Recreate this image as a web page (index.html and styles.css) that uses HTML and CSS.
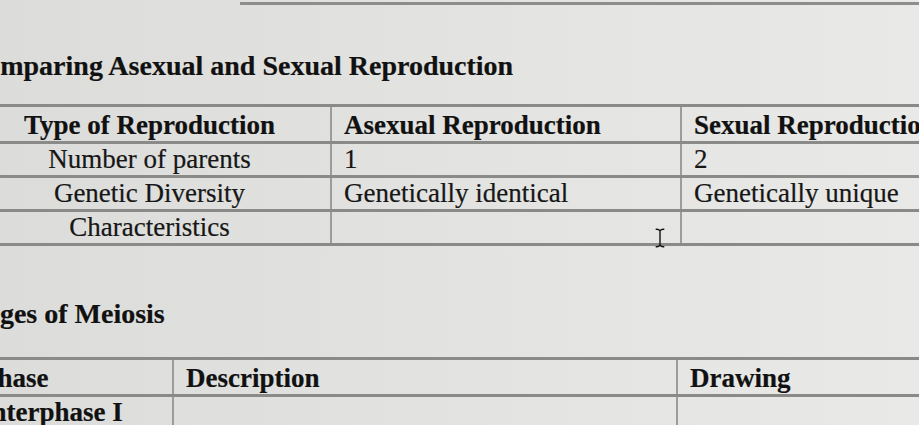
FILE: index.html
```html
<!DOCTYPE html>
<html lang="en">
<head>
<meta charset="utf-8">
<title>Reproduction worksheet</title>
<link rel="stylesheet" href="styles.css">
</head>
<body>
<div class="page">
  <div class="prev-rule"></div>
  <h2 class="title">Comparing Asexual and Sexual Reproduction</h2>
  <table class="grid compare">
    <colgroup><col class="c1"><col class="c2"><col class="c3"></colgroup>
    <tr class="head">
      <th class="center">Type of Reproduction</th>
      <th>Asexual Reproduction</th>
      <th>Sexual Reproduction</th>
    </tr>
    <tr>
      <td class="center">Number of parents</td>
      <td>1</td>
      <td>2</td>
    </tr>
    <tr>
      <td class="center">Genetic Diversity</td>
      <td>Genetically identical</td>
      <td>Genetically unique</td>
    </tr>
    <tr>
      <td class="center">Characteristics</td>
      <td></td>
      <td></td>
    </tr>
  </table>
  <h2 class="title title-two">Stages of Meiosis</h2>
  <table class="grid meiosis">
    <colgroup><col class="m1"><col class="m2"><col class="m3"></colgroup>
    <tr class="head">
      <th>Phase</th>
      <th>Description</th>
      <th>Drawing</th>
    </tr>
    <tr>
      <td class="bold">Interphase I</td>
      <td></td>
      <td></td>
    </tr>
  </table>
</div>
<svg class="ibeam" width="10" height="20" viewBox="0 0 10 20" aria-hidden="true">
  <path d="M1.2 1.2 Q4 1 5 3 Q6 1 8.8 1.2 M5 3 V17 M1.2 18.8 Q4 19 5 17 Q6 19 8.8 18.8" fill="none" stroke="#111" stroke-width="1.4" stroke-linecap="round"/>
</svg>
</body>
</html>
```
FILE: styles.css
```css
html, body {
  margin: 0;
  padding: 0;
  overflow: hidden;
}
body {
  position: relative;
  width: 919px;
  height: 425px;
  background: linear-gradient(90deg, #dcdddb 0%, #e2e3e0 45%, #e9e9e7 100%);
  font-family: "Liberation Serif", "Times New Roman", serif;
  color: #161616;
}
.page {
  width: 1080px;
  margin-left: -33px;
}
.prev-rule {
  margin-top: 2px;
  margin-left: 273px;
  border-top: 3px solid #8d8d8b;
}
.title {
  margin: 45px 0 0 -1px;
  font-size: 28px;
  line-height: 32px;
  font-weight: bold;
  color: #111;
  -webkit-text-stroke: 0.2px #111;
}
.title-two {
  margin-top: 52px;
  margin-left: -6px;
}
.grid {
  border-collapse: collapse;
  table-layout: fixed;
  width: 1080px;
  font-size: 27px;
  line-height: 31px;
  -webkit-text-stroke: 0.2px #161616;
}
.compare { margin-top: 22px; }
.meiosis { margin-top: 27px; }
.grid th,
.grid td {
  border-top: 3px solid #8a8a88;
  border-bottom: 3px solid #8a8a88;
  border-left: 2px solid #9c9c9a;
  border-right: 2px solid #9c9c9a;
  padding: 0 12px;
  text-align: left;
  vertical-align: top;
  white-space: nowrap;
  overflow: hidden;
}
.grid th {
  font-weight: bold;
  color: #111;
  padding-top: 3px;
  height: 31px;
}
.grid td { height: 31px; }
.grid .center { text-align: center; }
.grid .bold { font-weight: bold; color: #111; }
.c1 { width: 363px; }
.c2 { width: 350px; }
.c3 { width: 367px; }
.m1 { width: 205px; }
.m2 { width: 504px; }
.m3 { width: 371px; }
.ibeam {
  position: absolute;
  left: 655px;
  top: 228px;
}
```
